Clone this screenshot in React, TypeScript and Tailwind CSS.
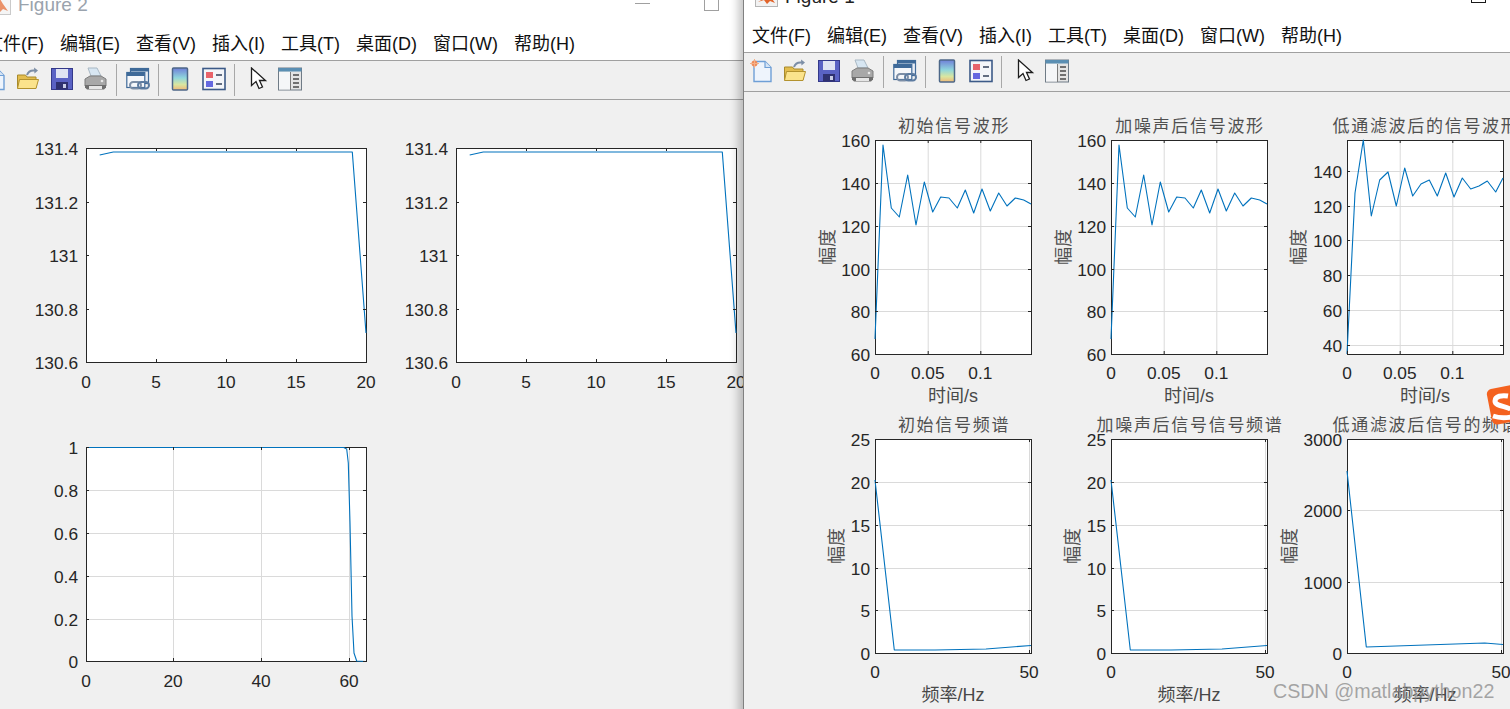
const fontClass = "font-['Liberation_Sans','Noto_Sans_CJK_SC',sans-serif]";

type Tick = [string, number];

interface PlotProps {
  width: number;
  title?: string;
  xLabel?: string;
  yLabel?: string;
  yLabelX?: number;
  xTicks: Tick[];
  yTicks: Tick[];
  grid?: boolean;
  points: string;
  tickGap?: number;
  xTickY?: number;
}

const HEIGHT = 214;

function Plot({ width, title, xLabel, yLabel, yLabelX = 0, xTicks, yTicks, grid = true, points, tickGap = 5, xTickY = 24.5 }: PlotProps) {
  return (
    <svg width={width + 1} height={HEIGHT + 1} className={`block overflow-visible ${fontClass}`}>
      <rect x={0.5} y={0.5} width={width} height={HEIGHT} fill="#ffffff" />
      {grid &&
        xTicks.map(([, x], i) => (
          <line key={i} x1={x + 0.5} x2={x + 0.5} y1={0} y2={HEIGHT} stroke="#dadada" />
        ))}
      {grid &&
        yTicks.map(([, y], i) => (
          <line key={i} x1={0} x2={width} y1={y + 0.5} y2={y + 0.5} stroke="#dadada" />
        ))}
      <rect x={0.5} y={0.5} width={width} height={HEIGHT} fill="none" stroke="#262626" />
      <polyline points={points} fill="none" stroke="#0072bd" strokeWidth={1.1} strokeLinejoin="round" />
      {xTicks.map(([label, x], i) => (
        <g key={i}>
          <line x1={x + 0.5} x2={x + 0.5} y1={HEIGHT} y2={HEIGHT - 3} stroke="#262626" />
          <line x1={x + 0.5} x2={x + 0.5} y1={0} y2={3} stroke="#262626" />
          <text x={x} y={HEIGHT + xTickY} textAnchor="middle" fontSize={17.3} fill="#262626">
            {label}
          </text>
        </g>
      ))}
      {yTicks.map(([label, y], i) => (
        <g key={i}>
          <line x1={0} x2={3} y1={y + 0.5} y2={y + 0.5} stroke="#262626" />
          <line x1={width} x2={width - 3} y1={y + 0.5} y2={y + 0.5} stroke="#262626" />
          <text x={-tickGap} y={y + 7} textAnchor="end" fontSize={17.3} fill="#262626">
            {label}
          </text>
        </g>
      ))}
      {title && (
        <text x={width / 2 + 1} y={-8} textAnchor="middle" fontSize={17} letterSpacing={1.7} fill="#505050">
          {title}
        </text>
      )}
      {xLabel && (
        <text x={width / 2} y={HEIGHT + 47.5} textAnchor="middle" fontSize={18} fill="#484848">
          {xLabel}
        </text>
      )}
      {yLabel && (
        <text
          x={yLabelX}
          y={HEIGHT / 2}
          textAnchor="middle"
          dominantBaseline="central"
          fontSize={18}
          fill="#505050"
          transform={`rotate(-90 ${yLabelX} ${HEIGHT / 2})`}
        >
          {yLabel}
        </text>
      )}
    </svg>
  );
}

// curves read off the screenshot, in pixels from the axes' top-left corner
const rawWave =
  '0,199 8,5 16.3,68 24.3,77 32.7,35 41,85 49.3,42 57.7,72 65.7,57 74,58 82.3,68 90.3,50 98.7,73 107,49 115.3,71 123.7,53 132,66 140.3,58 148.7,60 156,64';
const filteredWave =
  '0,214 8,53 16.3,0 24.3,76 32.7,40 41,32 49.3,66 57.7,28 65.7,56 74,44 82.3,40 90.3,56 98.7,33 107,57 115.3,38 123.7,49 132,46 140.3,41 148.7,52 156,38';
const rawSpectrum = '0,41 19.3,211 60,211 111,210 156,206.5';
const filteredSpectrum = '0,32 19.3,208 137.7,204 156,205.5';
const flatCurve = '13.7,7 27.3,4 266.3,4 280,185';
const filterCurve = '0,0.5 257.7,0.5 260.7,2 262.3,16 264,76 266,169 268,206 270.7,214 280,214.5';

const waveX: Tick[] = [
  ['0', 0],
  ['0.05', 52.7],
  ['0.1', 105.3],
];
const waveY: Tick[] = [
  ['160', 0],
  ['140', 43],
  ['120', 86],
  ['100', 129],
  ['80', 171],
  ['60', 214],
];
const filteredY: Tick[] = [
  ['140', 31],
  ['120', 66],
  ['100', 100],
  ['80', 135],
  ['60', 170],
  ['40', 205],
];
const spectrumX: Tick[] = [
  ['0', 0],
  ['50', 154],
];
const spectrumY: Tick[] = [
  ['25', 0],
  ['20', 43],
  ['15', 86],
  ['10', 129],
  ['5', 171],
  ['0', 214],
];
const filteredSpectrumY: Tick[] = [
  ['3000', 0],
  ['2000', 71],
  ['1000', 143],
  ['0', 214],
];
const flatX: Tick[] = [
  ['0', 0],
  ['5', 70],
  ['10', 140],
  ['15', 210],
  ['20', 280],
];
const flatY: Tick[] = [
  ['131.4', 0],
  ['131.2', 54],
  ['131', 107],
  ['130.8', 161],
  ['130.6', 214],
];
const filterX: Tick[] = [
  ['0', 0],
  ['20', 87],
  ['40', 175],
  ['60', 263],
];
const filterY: Tick[] = [
  ['1', 0],
  ['0.8', 43],
  ['0.6', 86],
  ['0.4', 129],
  ['0.2', 172],
  ['0', 214],
];

const menus = ['文件(F)', '编辑(E)', '查看(V)', '插入(I)', '工具(T)', '桌面(D)', '窗口(W)', '帮助(H)'];

function NewIcon() {
  return (
    <svg width="24" height="24" viewBox="0 0 24 24">
      <path d="M4 2.500h11l6 6v14H4z" fill="#eef4fc" stroke="#6f9fd6" strokeWidth="1.400" />
      <path d="M15 2.500v6h6" fill="#d5e4f5" stroke="#6f9fd6" strokeWidth="1.200" />
      <circle cx="4.500" cy="4.500" r="3" fill="#f08c5a" />
      <path d="M4.500 0v9M0 4.500h9" stroke="#f4b088" strokeWidth="1" />
    </svg>
  );
}

function OpenIcon() {
  return (
    <svg width="24" height="24" viewBox="0 0 24 24">
      <path d="M1.500 8h8l1.500 2h9v11h-18.500z" fill="#e3bd4e" stroke="#a88a2c" />
      <path d="M1.500 21.500l2-9h19l-2.500 9z" fill="#fbe38c" stroke="#b3922e" />
      <path d="M11 8c1-3 4-5 8-4.500" fill="none" stroke="#7c8ea6" strokeWidth="2" />
      <path d="M18 0.500l4 3-3.500 3z" fill="#7c8ea6" />
    </svg>
  );
}

function SaveIcon() {
  return (
    <svg width="24" height="24" viewBox="0 0 24 24">
      <rect x="1.500" y="1.500" width="21" height="21" fill="#5a62c4" stroke="#34398a" />
      <rect x="6" y="2" width="12" height="9" fill="#dfe3f3" />
      <rect x="6" y="15" width="12" height="7.500" fill="#2f3170" />
      <rect x="13" y="17" width="3" height="4" fill="#c9cde6" />
    </svg>
  );
}

function PrintIcon() {
  return (
    <svg width="24" height="24" viewBox="0 0 24 24">
      <path d="M5 1h9l4 8H8z" fill="#d7e6f2" stroke="#a9b8c4" />
      <path d="M2 12l5-3h11l5 3v7H2z" fill="#a8a8a8" stroke="#7d7d7d" />
      <path d="M2 18h21v2.500l-2 2H4l-2-2z" fill="#6f6f6f" />
      <rect x="6" y="19" width="13" height="3" fill="#e6e6e6" />
      <circle cx="19" cy="14" r="1.300" fill="#e8e8e8" />
    </svg>
  );
}

function LinkIcon() {
  return (
    <svg width="24" height="24" viewBox="0 0 24 24">
      <rect x="4.500" y="1.500" width="18" height="15" fill="#e9eef5" stroke="#3f6a99" strokeWidth="1.200" />
      <rect x="4.500" y="1.500" width="18" height="3" fill="#3f6a99" />
      <rect x="0.800" y="5.500" width="18" height="15" fill="#f5f7fa" stroke="#3f6a99" strokeWidth="1.200" />
      <rect x="0.800" y="5.500" width="18" height="3.500" fill="#3f6a99" />
      <rect x="4" y="15" width="11" height="6.500" rx="3.200" fill="none" stroke="#7c8ea6" strokeWidth="2" />
      <rect x="12" y="15" width="11" height="6.500" rx="3.200" fill="none" stroke="#5c7ba0" strokeWidth="2" />
    </svg>
  );
}

function ColorbarIcon() {
  return (
    <svg width="24" height="24" viewBox="0 0 24 24">
      <defs>
        <linearGradient id="colorbar-fill" x1="0" y1="0" x2="0" y2="1">
          <stop offset="0" stopColor="#6f7fd8" />
          <stop offset="0.45" stopColor="#8fd6dc" />
          <stop offset="0.75" stopColor="#d9e6a0" />
          <stop offset="1" stopColor="#f0b878" />
        </linearGradient>
      </defs>
      <rect x="4.500" y="1" width="15" height="22" rx="1" fill="url(#colorbar-fill)" stroke="#4d6788" strokeWidth="1.500" />
    </svg>
  );
}

function LegendIcon() {
  return (
    <svg width="24" height="24" viewBox="0 0 24 24">
      <rect x="1" y="1.500" width="22" height="21" fill="#f3f5f9" stroke="#3c5a88" strokeWidth="1.600" />
      <rect x="4" y="5" width="7" height="6" fill="#e8636b" />
      <rect x="4" y="14" width="7" height="6" fill="#6468e0" />
      <path d="M14 8h6M14 17h6" stroke="#33405a" strokeWidth="1.600" />
    </svg>
  );
}

function CursorIcon() {
  return (
    <svg width="24" height="24" viewBox="0 0 24 24">
      <path d="M5.500 1v17.500l4.500-4 3 7 3.500-1.500-3-6.500h6z" fill="#ffffff" stroke="#1d1d1d" strokeWidth="1.300" strokeLinejoin="miter" />
    </svg>
  );
}

function PropertyIcon() {
  return (
    <svg width="24" height="24" viewBox="0 0 24 24">
      <rect x="0.500" y="1" width="23" height="22" fill="#e4e4e4" stroke="#6f7b86" />
      <rect x="0.500" y="1" width="23" height="3.500" fill="#5b8fb3" />
      <rect x="1" y="5" width="11.500" height="17.500" fill="#f5f6f8" />
      <path d="M12.500 5v18" stroke="#7c7c7c" />
      <path d="M15 8h6M15 12h6M15 16h6M15 20h6" stroke="#4a4a4a" strokeWidth="1.500" />
    </svg>
  );
}

function ToolButton({ children, className = '' }: { children: React.ReactNode; className?: string }) {
  return <div className={`flex h-full w-[34px] shrink-0 items-center justify-center pb-[3px] ${className}`}>{children}</div>;
}

function Toolbar() {
  return (
    <div className="flex h-[39px] shrink-0 items-center border-b border-[#a0a0a0] bg-[#f0f0f0] pl-px">
      <ToolButton><NewIcon /></ToolButton>
      <ToolButton className="-ml-px"><OpenIcon /></ToolButton>
      <ToolButton><SaveIcon /></ToolButton>
      <ToolButton className="-ml-px"><PrintIcon /></ToolButton>
      <div className="ml-[4px] mr-[4px] h-[32px] w-px bg-[#a8a8a8]" />
      <ToolButton><LinkIcon /></ToolButton>
      <div className="ml-[3px] mr-[4px] h-[32px] w-px bg-[#a8a8a8]" />
      <ToolButton><ColorbarIcon /></ToolButton>
      <ToolButton><LegendIcon /></ToolButton>
      <div className="ml-[3px] mr-[6px] h-[32px] w-px bg-[#a8a8a8]" />
      <ToolButton><CursorIcon /></ToolButton>
      <ToolButton className="-ml-[2px]"><PropertyIcon /></ToolButton>
    </div>
  );
}

function WindowIcon({ faded }: { faded: boolean }) {
  return (
    <svg width="23" height="20" viewBox="0 0 23 20" className={faded ? 'opacity-70' : ''}>
      <rect x="0.500" y="0.500" width="22" height="19" fill="#f2f2f2" stroke="#b5b5b5" />
      <path d="M3 15l5-3 4-8 3 5 5 7-5-2-3 3-3-4z" fill="#e2642a" />
      <path d="M8 12l4-8-1 8z" fill="#b33f1c" />
    </svg>
  );
}

function FigureWindow({
  name,
  active,
  className,
  children,
}: {
  name: string;
  active: boolean;
  className: string;
  children: React.ReactNode;
}) {
  const chrome = active ? 'border-[#1a1a1a]' : 'border-[#a0a0a0]';
  return (
    <div className={`flex w-[767px] shrink-0 flex-col border-l border-[#808080] ${fontClass} ${className}`}>
      {/* title bar */}
      <div className="flex h-[30px] shrink-0 items-center bg-white pl-[11px]">
        <WindowIcon faded={!active} />
        <span className={`ml-[7px] text-[19px] ${active ? 'text-[#222222]' : 'text-[#9aa3ad]'}`}>{name}</span>
        <div className={`ml-auto mb-[3px] h-0 w-[15px] border-t ${chrome}`} />
        <div className={`ml-[54px] mr-[24px] mb-[3px] h-[15px] w-[15px] border ${chrome}`} />
      </div>
      {/* menu bar */}
      <div className="flex h-[41px] shrink-0 items-center gap-[16px] border-b border-[#a0a0a0] bg-white pl-[8px] pt-[9px] text-[18px] text-[#111111]">
        {menus.map((m) => (
          <span key={m} className="whitespace-nowrap">
            {m}
          </span>
        ))}
      </div>
      <Toolbar />
      {children}
    </div>
  );
}

export default function App() {
  return (
    <div className="relative flex h-[709px] w-[1510px] overflow-hidden bg-[#f0f0f0]">
      <FigureWindow name="Figure 2" active={false} className="-ml-[24px] -mt-[10px] h-[730px] bg-[#f0f0f0]">
        <div className="grid grid-cols-[280px_280px] gap-x-[90px] gap-y-[84px] pl-[109px] pt-[48px]">
          <Plot width={280} tickGap={8} xTickY={25.5} xTicks={flatX} yTicks={flatY} grid={false} points={flatCurve} />
          <Plot width={280} tickGap={8} xTickY={25.5} xTicks={flatX} yTicks={flatY} grid={false} points={flatCurve} />
          <Plot width={280} tickGap={8} xTickY={25.5} xTicks={filterX} yTicks={filterY} points={filterCurve} />
        </div>
      </FigureWindow>

      <FigureWindow
        name="Figure 1"
        active
        className="relative -mt-[18px] h-[740px] bg-[#f0f0f0] shadow-[-6px_0_8px_-1px_rgba(0,0,0,0.22)]"
      >
        <div className="grid grid-cols-[156px_156px_156px] gap-x-[80px] gap-y-[84px] pl-[131px] pt-[48px]">
          <Plot width={156} title="初始信号波形" xLabel="时间/s" yLabel="幅度" yLabelX={-47} xTicks={waveX} yTicks={waveY} points={rawWave} />
          <Plot width={156} title="加噪声后信号波形" xLabel="时间/s" yLabel="幅度" yLabelX={-47} xTicks={waveX} yTicks={waveY} points={rawWave} />
          <Plot width={156} title="低通滤波后的信号波形" xLabel="时间/s" yLabel="幅度" yLabelX={-48} xTicks={waveX} yTicks={filteredY} points={filteredWave} />
          <Plot width={156} title="初始信号频谱" xLabel="频率/Hz" yLabel="幅度" yLabelX={-38} xTicks={spectrumX} yTicks={spectrumY} points={rawSpectrum} />
          <Plot width={156} title="加噪声后信号信号频谱" xLabel="频率/Hz" yLabel="幅度" yLabelX={-38} xTicks={spectrumX} yTicks={spectrumY} points={rawSpectrum} />
          <Plot width={156} title="低通滤波后信号的频谱" xLabel="频率/Hz" yLabel="幅度" yLabelX={-57} xTicks={spectrumX} yTicks={filteredSpectrumY} points={filteredSpectrum} />
        </div>
      </FigureWindow>

      {/* input method badge floating over the page */}
      <svg width="30" height="46" viewBox="0 0 30 46" className="absolute left-[1481px] top-[385px]">
        <rect x="5" y="5" width="44" height="36" rx="5" fill="#f4621f" transform="rotate(-11 5 5)" />
        <path d="M27 11c-6-1-13 0-13 5 0 6 14 5 16 9" fill="none" stroke="#ffffff" strokeWidth="5" />
        <path d="M12 31c6 2 12 2 18 1" fill="none" stroke="#ffffff" strokeWidth="5" />
      </svg>

      {/* watermark */}
      <div className={`absolute left-[1273px] top-[679px] text-[19.7px] leading-[24px] text-[#8a8a8a]/75 ${fontClass}`}>
        CSDN @matlabpython22
      </div>
    </div>
  );
}
